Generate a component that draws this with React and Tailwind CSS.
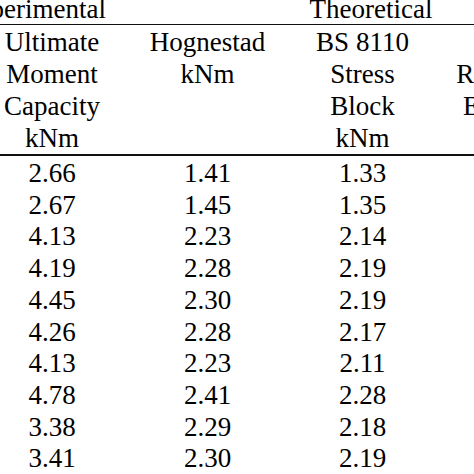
import React from "react";

const rows = [
  ["2.66", "1.41", "1.33"],
  ["2.67", "1.45", "1.35"],
  ["4.13", "2.23", "2.14"],
  ["4.19", "2.28", "2.19"],
  ["4.45", "2.30", "2.19"],
  ["4.26", "2.28", "2.17"],
  ["4.13", "2.23", "2.11"],
  ["4.78", "2.41", "2.28"],
  ["3.38", "2.29", "2.18"],
  ["3.41", "2.30", "2.19"],
];

const cols = "grid grid-cols-[156px_155px_155px_163px] text-center";

function App() {
  return (
    <div className="w-[474px] h-[474px] overflow-hidden bg-white text-black">
      <div className="ml-[-26px] w-[629px] [font-family:'Liberation_Serif','Times_New_Roman',serif] text-[27px]">
        {/* group headers */}
        <div className="grid grid-cols-[156px_473px] h-[24px] leading-[18px]">
          <div className="flex justify-end pr-[24px] whitespace-nowrap">
            <span className="shrink-0">Experimental</span>
          </div>
          <div className="text-center pl-[9px]">Theoretical</div>
        </div>
        <div className="border-t border-[#111]" />

        {/* column headers */}
        <div className={`${cols} pt-[1px] leading-[32px]`}>
          <div>
            <div>Ultimate</div>
            <div>Moment</div>
            <div>Capacity</div>
            <div>kNm</div>
          </div>
          <div>
            <div>Hognestad</div>
            <div>kNm</div>
          </div>
          <div>
            <div>BS 8110</div>
            <div>Stress</div>
            <div>Block</div>
            <div>kNm</div>
          </div>
          <div>
            <div>&nbsp;</div>
            <div>Rectangular</div>
            <div>Equivalent</div>
            <div>kNm</div>
          </div>
        </div>
        <div className="border-t-2 border-[#111]" />

        {/* data */}
        <div className="pt-[2px] leading-[31.7px]">
          {rows.map((r, i) => (
            <div key={i} className={cols}>
              <div>{r[0]}</div>
              <div>{r[1]}</div>
              <div>{r[2]}</div>
              <div></div>
            </div>
          ))}
        </div>
      </div>
    </div>
  );
}

export default App;
